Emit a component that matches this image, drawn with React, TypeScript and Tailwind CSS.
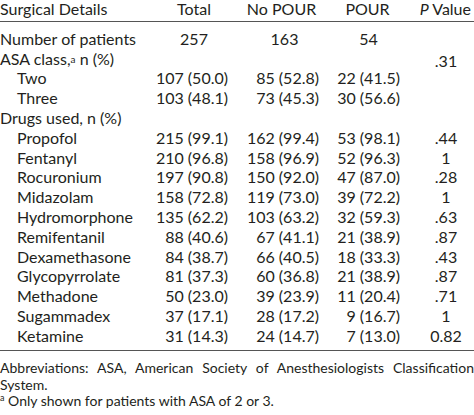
import React from 'react';

type Row = {
    label: string;
    sup?: string;
    indent?: boolean;
    total?: string;
    noPour?: string;
    pour?: string;
    p?: string;
    center?: boolean;
};

const rows: Row[] = [
    { label: 'Number of patients', total: '257', noPour: '163', pour: '54', center: true },
    { label: 'ASA class,', sup: 'a', total: '', p: '.31' },
    { label: 'Two', indent: true, total: '107 (50.0)', noPour: '85 (52.8)', pour: '22 (41.5)' },
    { label: 'Three', indent: true, total: '103 (48.1)', noPour: '73 (45.3)', pour: '30 (56.6)' },
    { label: 'Drugs used, n (%)' },
    { label: 'Propofol', indent: true, total: '215 (99.1)', noPour: '162 (99.4)', pour: '53 (98.1)', p: '.44' },
    { label: 'Fentanyl', indent: true, total: '210 (96.8)', noPour: '158 (96.9)', pour: '52 (96.3)', p: '1' },
    { label: 'Rocuronium', indent: true, total: '197 (90.8)', noPour: '150 (92.0)', pour: '47 (87.0)', p: '.28' },
    { label: 'Midazolam', indent: true, total: '158 (72.8)', noPour: '119 (73.0)', pour: '39 (72.2)', p: '1' },
    { label: 'Hydromorphone', indent: true, total: '135 (62.2)', noPour: '103 (63.2)', pour: '32 (59.3)', p: '.63' },
    { label: 'Remifentanil', indent: true, total: '88 (40.6)', noPour: '67 (41.1)', pour: '21 (38.9)', p: '.87' },
    { label: 'Dexamethasone', indent: true, total: '84 (38.7)', noPour: '66 (40.5)', pour: '18 (33.3)', p: '.43' },
    { label: 'Glycopyrrolate', indent: true, total: '81 (37.3)', noPour: '60 (36.8)', pour: '21 (38.9)', p: '.87' },
    { label: 'Methadone', indent: true, total: '50 (23.0)', noPour: '39 (23.9)', pour: '11 (20.4)', p: '.71' },
    { label: 'Sugammadex', indent: true, total: '37 (17.1)', noPour: '28 (17.2)', pour: '9 (16.7)', p: '1' },
    { label: 'Ketamine', indent: true, total: '31 (14.3)', noPour: '24 (14.7)', pour: '7 (13.0)', p: '0.82' },
];

const grid = 'grid grid-cols-[152px_84px_91px_81px_66px]';

export default function App() {
    return (
        <div className="w-[474px] h-[415px] bg-white text-[#231f20] overflow-hidden" style={{ fontFamily: 'Lato, "Open Sans", sans-serif' }}>
            {/* header */}
            <div className={`${grid} h-[22px] items-start text-[16px] leading-[18px] border-b-[1.5px] border-[#555]`}>
                <div className="whitespace-nowrap">Surgical Details</div>
                <div className="text-center">Total</div>
                <div className="text-center whitespace-nowrap">No POUR</div>
                <div className="text-center">POUR</div>
                <div className="text-right whitespace-nowrap pr-[3px]"><span className="italic">P</span> Value</div>
            </div>

            {/* body */}
            <div className="pt-[7px] pb-[4px] border-b-[1.5px] border-[#555]">
                {rows.map((r) => (
                    <div key={r.label} className={`${grid} h-[19.8px] items-center text-[16px] leading-[18px] whitespace-nowrap`}>
                        <div className={r.indent ? 'pl-[17px]' : ''}>
                            {r.label}
                            {r.sup && <sup className="text-[10px] relative -top-[2px]">{r.sup}</sup>}
                            {r.sup && ' n (%)'}
                        </div>
                        <div className={r.center ? 'text-center' : 'text-right pr-[8px]'}>{r.total}</div>
                        <div className={r.center ? 'text-center pl-[6px]' : 'text-right pr-[8px]'}>{r.noPour}</div>
                        <div className={r.center ? 'text-center pl-[2px]' : 'text-right pr-[8px]'}>{r.pour}</div>
                        <div className={`text-center pl-[10px] ${r.sup ? 'translate-y-[2px]' : ''}`}>{r.p}</div>
                    </div>
                ))}
            </div>

            {/* footnotes */}
            <div className="pt-[8px] text-[14px] leading-[17px]">
                <p className="text-justify">Abbreviations: ASA, American Society of Anesthesiologists Classification System.</p>
                <p className="leading-[15px]"><sup className="text-[9px]">a</sup> Only shown for patients with ASA of 2 or 3.</p>
            </div>
        </div>
    );
}
